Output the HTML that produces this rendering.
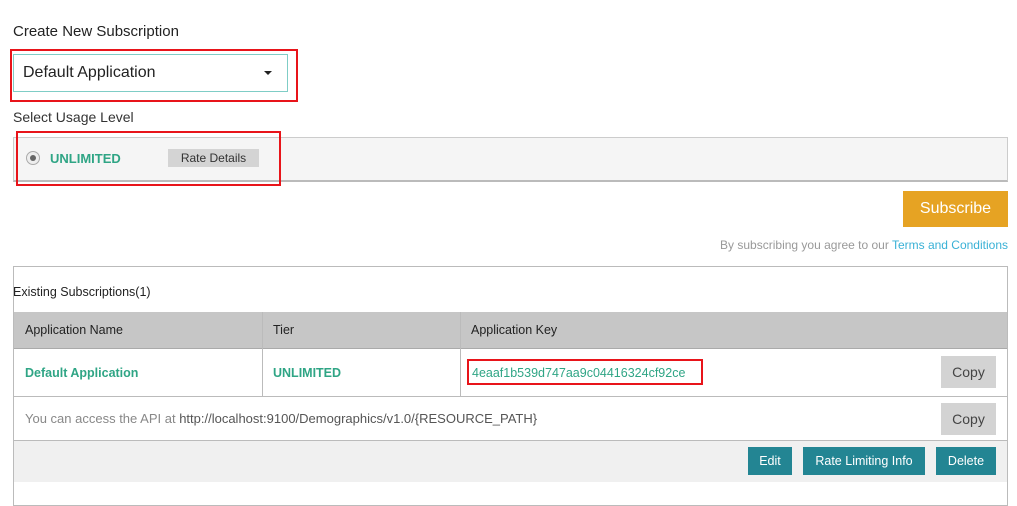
<!DOCTYPE html>
<html><head><style>
*{box-sizing:border-box;margin:0;padding:0}
body{width:1017px;height:488px;background:#fff;font-family:"Liberation Sans",sans-serif;position:relative;overflow:hidden;color:#333}
.a{position:absolute}
.btn{position:absolute;display:flex;align-items:center;justify-content:center}
.g{color:#2fa585;font-weight:bold;font-size:12.5px}
</style></head><body>
<div class="a" style="left:13px;top:23px;font-size:15px;color:#222">Create New Subscription</div>
<div class="a" style="left:10px;top:49px;width:288px;height:53px;border:2px solid #e8141a"></div>
<div class="a" style="left:13px;top:54px;width:275px;height:38px;border:1px solid #7fcdc6;background:#fff"></div>
<div class="a" style="left:23px;top:64px;font-size:16px;color:#222">Default Application</div>
<div class="a" style="left:264px;top:71px;width:0;height:0;border-left:4px solid transparent;border-right:4px solid transparent;border-top:4px solid #222"></div>
<div class="a" style="left:13px;top:109px;font-size:14px;color:#333">Select Usage Level</div>
<div class="a" style="left:13px;top:137px;width:995px;height:45px;background:#f5f5f5;border:1px solid #ccc;border-bottom:2px solid #bbb"></div>
<div class="a" style="left:16px;top:131px;width:265px;height:55px;border:2px solid #e8141a"></div>
<div class="a" style="left:26px;top:151px;width:14px;height:14px;border-radius:50%;border:1px solid #aaa;background:#eee"></div>
<div class="a" style="left:30px;top:155px;width:6px;height:6px;border-radius:50%;background:#666"></div>
<div class="a g" style="left:50px;top:151px;font-size:13px">UNLIMITED</div>
<div class="btn" style="left:168px;top:149px;width:91px;height:18px;background:#d4d4d4;font-size:12px;color:#333">Rate Details</div>
<div class="btn" style="left:903px;top:191px;width:105px;height:36px;background:#e6a323;color:#fff;font-size:16px">Subscribe</div>
<div class="a" style="right:9px;top:238px;font-size:12px;color:#999">By subscribing you agree to our <span style="color:#39b1d6">Terms and Conditions</span></div>
<div class="a" style="left:13px;top:266px;width:995px;height:240px;border:1px solid #bbb"></div>
<div class="a" style="left:13px;top:285px;font-size:12.5px;color:#222">Existing Subscriptions(1)</div>
<div class="a" style="left:14px;top:312px;width:993px;height:37px;background:#c6c6c6;border-bottom:1px solid #aaa"></div>
<div class="a" style="left:25px;top:323px;font-size:12.5px;color:#222">Application Name</div>
<div class="a" style="left:273px;top:323px;font-size:12.5px;color:#222">Tier</div>
<div class="a" style="left:471px;top:323px;font-size:12.5px;color:#222">Application Key</div>
<div class="a" style="left:262px;top:312px;width:1px;height:85px;background:#bbb"></div>
<div class="a" style="left:460px;top:312px;width:1px;height:85px;background:#bbb"></div>
<div class="a" style="left:14px;top:396px;width:993px;height:1px;background:#bbb"></div>
<div class="a g" style="left:25px;top:366px">Default Application</div>
<div class="a g" style="left:273px;top:366px">UNLIMITED</div>
<div class="a g" style="left:472px;top:366px;font-weight:normal;font-size:12.5px">4eaaf1b539d747aa9c04416324cf92ce</div>
<div class="a" style="left:467px;top:359px;width:236px;height:26px;border:2px solid #e8141a"></div>
<div class="btn" style="left:941px;top:356px;width:55px;height:32px;background:#d3d3d3;font-size:14px;color:#444">Copy</div>
<div class="a" style="left:25px;top:411px;font-size:13px;color:#888">You can access the API at <span style="color:#555">http://localhost:9100/Demographics/v1.0/{RESOURCE_PATH}</span></div>
<div class="btn" style="left:941px;top:403px;width:55px;height:32px;background:#d3d3d3;font-size:14px;color:#444">Copy</div>
<div class="a" style="left:14px;top:440px;width:993px;height:42px;background:#f0f0f0;border-top:1px solid #bbb"></div>
<div class="btn" style="left:748px;top:447px;width:44px;height:28px;background:#238593;color:#fff;font-size:12.5px">Edit</div>
<div class="btn" style="left:803px;top:447px;width:122px;height:28px;background:#238593;color:#fff;font-size:12.5px">Rate Limiting Info</div>
<div class="btn" style="left:936px;top:447px;width:60px;height:28px;background:#238593;color:#fff;font-size:12.5px">Delete</div>
</body></html>
